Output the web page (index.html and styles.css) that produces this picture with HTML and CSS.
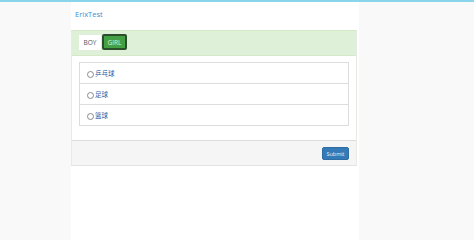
FILE: index.html
```html
<!DOCTYPE html>
<html>
<head>
<meta charset="utf-8">
<link rel="stylesheet" href="styles.css">
</head>
<body>
<div class="topbar"></div>
<div class="page">
  <div class="container">
    <div class="brand">ErixTest</div>
    <div class="panel">
      <div class="panel-heading">
        <span class="btn btn-boy">BOY</span>
        <span class="btn btn-girl">GIRL</span>
      </div>
      <div class="panel-body">
        <ul class="list">
          <li class="item"><span class="radio"></span><span class="label">乒乓球</span></li>
          <li class="item"><span class="radio"></span><span class="label">足球</span></li>
          <li class="item"><span class="radio"></span><span class="label">篮球</span></li>
        </ul>
      </div>
      <div class="panel-footer">
        <span class="btn-submit">Submit</span>
      </div>
    </div>
  </div>
</div>
</body>
</html>
```

FILE: styles.css
```css
html, body {
  margin: 0;
  padding: 0;
  height: 100%;
}
body {
  background: #f9f9f9;
  font-family: "Open Sans", "Noto Sans CJK SC", sans-serif;
  display: flex;
  flex-direction: column;
}
.topbar {
  height: 2px;
  background: #8ad5eb;
  flex: none;
}
.page {
  flex: 1;
  display: flex;
}
.container {
  margin-left: 71px;
  width: 288px;
  background: #ffffff;
  box-sizing: border-box;
  padding-right: 2px;
}
.brand {
  color: #3b8fd0;
  font-size: 7.5px;
  line-height: 10px;
  padding: 7px 0 0 4px;
  height: 19px;
  box-sizing: border-box;
  margin-bottom: 9px;
}
.panel {
  border: 1px solid #d6e9c6;
  border-bottom-color: #e3e3e3;
  border-left-color: #e6ece3;
  border-right-color: #e6ece3;
}
.panel-heading {
  background: #dff0d8;
  height: 25px;
  box-sizing: border-box;
  padding: 3px 7px 0 7px;
  display: flex;
  align-items: flex-start;
  border-bottom: 1px solid #d6e9c6;
}
.btn {
  display: flex;
  align-items: center;
  justify-content: center;
  font-size: 6.5px;
  box-sizing: border-box;
}
.btn-boy {
  margin-top: 1px;
  width: 22px;
  height: 15px;
  background: #ffffff;
  color: #555;
}
.btn-girl {
  margin-left: 1px;
  width: 25px;
  height: 16px;
  background: #44a044;
  border: 2px solid #2b4f2b;
  border-radius: 2px;
  color: #d8f2d8;
}
.panel-body {
  padding: 6px 7px 14px 7px;
}
.list {
  list-style: none;
  margin: 0;
  padding: 0;
  border: 1px solid #dddddd;
}
.item {
  height: 20px;
  display: flex;
  align-items: center;
  padding-left: 7px;
  border-top: 1px solid #dddddd;
  box-sizing: border-box;
}
.item:first-child {
  border-top: none;
}
.item + .item {
  height: 21px;
}
.radio {
  width: 5px;
  height: 5px;
  border: 1px solid #8a8a8a;
  border-radius: 50%;
  margin-top: 2px;
  margin-right: 1px;
  background: #fff;
}
.label {
  font-family: "Noto Sans CJK SC", sans-serif;
  font-size: 6.5px;
  color: #2f5fa5;
}
.panel-footer {
  background: #f5f5f5;
  border-top: 1px solid #dddddd;
  height: 25px;
  box-sizing: border-box;
  display: flex;
  justify-content: flex-end;
  align-items: flex-start;
  padding: 6px 7px 0 0;
}
.btn-submit {
  width: 27px;
  height: 13px;
  background: #337ab7;
  border: 1px solid #2e6da4;
  border-radius: 2px;
  box-sizing: border-box;
  color: #e8f0f8;
  font-size: 5.5px;
  display: flex;
  align-items: center;
  justify-content: center;
}
```
